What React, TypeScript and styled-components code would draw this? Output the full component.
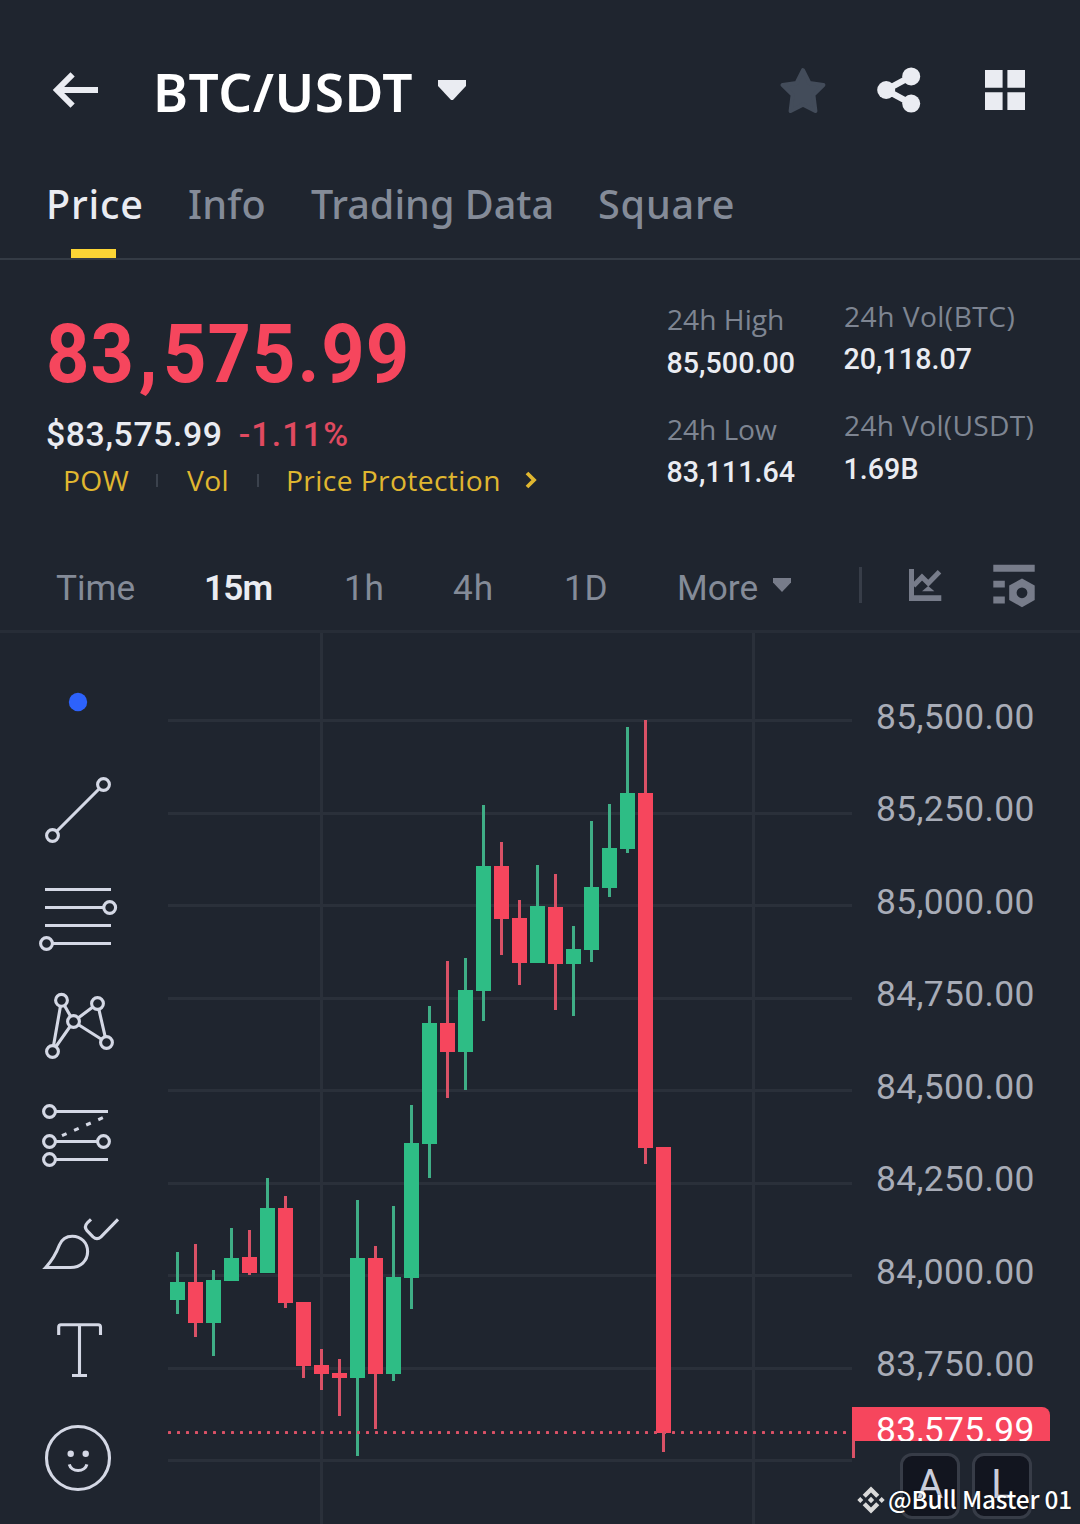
import React from "react";
import styled, { createGlobalStyle } from "styled-components";

const color = {
  bg: "#1f252f",
  text: "#eaecf2",
  muted: "#848b98",
  icon: "#777c8a",
  tool: "#d4d8e5",
  line: "#343b45",
  grid: "#2a303a",
  red: "#f6465d",
  redWick: "#d95166",
  green: "#2ebd85",
  greenWick: "#3fae86",
  gold: "#e0b730",
  axis: "#a8acb7",
};

const heading = `"Noto Sans", sans-serif`;
const label = `"Open Sans", "Noto Sans", sans-serif`;
const din = `Roboto, "Liberation Sans", sans-serif`;

const GlobalStyle = createGlobalStyle`
  *, *::before, *::after { box-sizing: border-box; }
  body { margin: 0; background: ${color.bg}; }
`;

const Screen = styled.main`
  width: 1080px;
  height: 1524px;
  overflow: hidden;
  display: flex;
  flex-direction: column;
  position: relative;
  background: ${color.bg};
  color: ${color.text};
  font-family: ${label};
  white-space: nowrap;
`;

const Icon = styled.svg`
  display: block;
  flex: none;
`;

/* Header */

const Header = styled.header`
  height: 180px;
  flex: none;
  display: flex;
  align-items: center;
  padding: 0 55px 0 50px;
`;

const Pair = styled.h1`
  width: 337px;
  margin: 0;
  padding: 4px 0 0 53px;
  font: 600 53.2px/64px ${heading};
  letter-spacing: 0.5px;
  color: #fff;
`;

const HeaderActions = styled.div`
  margin-left: auto;
  display: flex;
  align-items: center;
`;

const Action = styled.span<{ $gap?: number }>`
  margin-left: ${(p) => p.$gap ?? 0}px;
`;

/* Tabs */

const Tabs = styled.nav`
  height: 80px;
  flex: none;
  display: grid;
  grid-template-columns: 142px 123px 287px auto;
  justify-content: start;
  padding-left: 46px;
  border-bottom: 2px solid ${color.line};
`;

const Tab = styled.div<{ $active?: boolean; $tracking: number }>`
  justify-self: start;
  display: flex;
  flex-direction: column;
  justify-content: space-between;
  align-items: center;
  font: 500 39.6px/49px ${heading};
  letter-spacing: ${(p) => p.$tracking}px;
  color: ${(p) => (p.$active ? color.text : color.muted)};
`;

const TabMarker = styled.span`
  width: 45px;
  height: 9px;
  margin-right: 2px;
  background: #fcd535;
`;

/* Ticker */

const Ticker = styled.section`
  height: 285px;
  flex: none;
  display: flex;
`;

const PriceBlock = styled.div`
  width: 667px;
  padding: 49px 0 0 46px;
`;

const LastPrice = styled.div`
  font: 700 81.5px/90px ${din};
  letter-spacing: 1.1px;
  transform: scaleX(0.93);
  transform-origin: left;
  color: ${color.red};
`;

const Mark = styled.span<{ $before: number; $tracking: number }>`
  margin-left: ${(p) => p.$before}px;
  letter-spacing: ${(p) => p.$tracking}px;
`;

const FiatRow = styled.div`
  display: flex;
  gap: 16px;
  margin-top: 14px;
  font: 500 33.8px/44px ${din};
  letter-spacing: 0.6px;
`;

const Change = styled.span`
  color: #e04a60;
  letter-spacing: 1.2px;
`;

const Tags = styled.div`
  display: grid;
  grid-template-columns: 93px 31px 70px 29px 239px auto;
  justify-content: start;
  align-items: center;
  margin-top: 3px;
  padding-left: 17px;
  font: 400 28.2px/40px ${label};
  letter-spacing: 0.4px;
  color: ${color.gold};
`;

const TagDivider = styled.i`
  width: 2px;
  height: 13px;
  background: #3b424d;
`;

const StatColumn = styled.div<{ $top: number; $width: number }>`
  width: ${(p) => p.$width}px;
  padding-top: ${(p) => p.$top}px;
  display: flex;
  flex-direction: column;
  gap: 32px;
`;

const Stat = styled.dl`
  margin: 0;
  display: flex;
  flex-direction: column;
  gap: 9.5px;
`;

const StatLabel = styled.dt<{ $tracking: number }>`
  font: 400 28.2px/34px ${label};
  letter-spacing: ${(p) => p.$tracking}px;
  color: #7e8592;
`;

const StatValue = styled.dd`
  margin: 0 0 0 -0.5px;
  font: 500 28.6px/34px ${din};
  letter-spacing: 0.05px;
`;

/* Intervals */

const Intervals = styled.nav`
  height: 88px;
  flex: none;
  display: grid;
  grid-template-columns: 148px 140px 109px 111px 113px 182px 50px 84px auto;
  justify-content: start;
  align-items: center;
  padding-left: 56px;
  border-bottom: 3px solid #272d37;
`;

const Interval = styled.span<{ $active?: boolean; $tracking?: number }>`
  display: flex;
  align-items: center;
  padding-top: 0.6px;
  font: ${(p) => (p.$active ? 600 : 400)} 35.2px/44px ${din};
  letter-spacing: ${(p) => p.$tracking ?? 0}px;
  color: ${(p) => (p.$active ? color.text : color.muted)};
`;

const Caret = styled(Icon)`
  margin: -6px 0 0 15px;
`;

const IntervalDivider = styled.i`
  width: 3px;
  height: 36px;
  margin-top: -5px;
  background: #373d48;
`;

const Raised = styled(Icon)<{ $by: number }>`
  margin-top: -${(p) => p.$by}px;
`;

/* Chart */

const ChartArea = styled.section`
  flex: 1;
  display: flex;
  position: relative;
`;

const ToolBar = styled.aside`
  width: 168px;
  padding: 15px 0 0 24px;
  display: flex;
  flex-direction: column;
`;

const ToolIcon = styled(Icon)`
  fill: none;
  stroke: ${color.tool};
  stroke-width: 3.1;
`;

const Axis = styled.div`
  padding: 37.6px 0 0 23px;
  display: flex;
  flex-direction: column;
`;

const AxisLabel = styled.span`
  height: 92.55px;
  font: 400 35.4px/92.55px ${din};
  letter-spacing: 0.35px;
  color: ${color.axis};
`;

const PriceTag = styled.div`
  position: absolute;
  left: 852px;
  top: 774px;
  width: 198px;
  height: 34px;
  overflow: hidden;
  padding-left: 24px;
  border-top-right-radius: 8px;
  background: ${color.red};
  color: #fff;
  font: 400 35.4px/46px ${din};
  letter-spacing: 0.35px;
`;

const TagStem = styled.i`
  position: absolute;
  left: 852px;
  top: 807px;
  width: 3px;
  height: 18px;
  background: ${color.redWick};
`;

const ScaleButtons = styled.div`
  position: absolute;
  left: 900px;
  top: 820px;
  display: flex;
  gap: 12px;
`;

const ScaleButton = styled.button`
  width: 60px;
  height: 66px;
  padding: 0 0 2px;
  border: 3px solid #373c47;
  border-radius: 12px;
  background: #12151f;
  color: #c9cddb;
  font: 400 40px/52px ${din};
`;

const Watermark = styled.div`
  position: absolute;
  left: 857px;
  top: 1482px;
  height: 36px;
  display: flex;
  align-items: center;
  gap: 3px;
  color: #fff;
  font: 500 24.4px/36px "Noto Sans CJK SC", sans-serif;
  letter-spacing: -0.2px;
  text-shadow: 0 0 2px rgba(0, 0, 0, 0.5);
`;

const Handle = styled.span`
  margin-top: -2px;
`;

type Candle = [high: number, bodyTop: number, bodyBottom: number, low: number, up: boolean];

const candles: Candle[] = [
  [619, 649, 667, 681, true],
  [611, 649, 690, 704, false],
  [637, 647, 690, 723, true],
  [595, 625, 648, 648, true],
  [597, 624, 640, 642, false],
  [545, 575, 640, 640, true],
  [563, 575, 670, 675, false],
  [669, 669, 733, 745, false],
  [716, 732, 741, 757, false],
  [726, 740, 745, 783, false],
  [567, 625, 745, 823, true],
  [613, 625, 741, 796, false],
  [573, 644, 741, 748, true],
  [472, 510, 645, 676, true],
  [373, 390, 511, 545, true],
  [328, 390, 419, 465, false],
  [325, 357, 419, 457, true],
  [172, 233, 358, 388, true],
  [209, 233, 286, 322, false],
  [267, 285, 330, 352, false],
  [232, 273, 330, 330, true],
  [241, 274, 331, 377, false],
  [293, 316, 331, 383, true],
  [188, 254, 317, 329, true],
  [171, 215, 255, 264, true],
  [94, 160, 216, 220, true],
  [87, 160, 515, 531, false],
  [514, 514, 800, 819, false],
];

const axisPrices = [
  "85,500.00",
  "85,250.00",
  "85,000.00",
  "84,750.00",
  "84,500.00",
  "84,250.00",
  "84,000.00",
  "83,750.00",
];

const gridRows = Array.from({ length: 9 }, (_, i) => 87.2 + i * 92.5);
const dots = Array.from({ length: 76 }, (_, i) => i * 9);

const Plot = () => (
  <Icon width="685" height="891" viewBox="0 0 685 891">
    {gridRows.map((y) => (
      <rect key={y} x="0" y={Math.round(y) - 1} width="684" height="3" fill={color.grid} />
    ))}
    {[152, 584].map((x) => (
      <rect key={x} x={x} y="-3" width="3" height="894" fill={color.grid} />
    ))}
    {candles.map(([high, top, bottom, low, up], i) => (
      <g key={i}>
        <rect
          x={8 + i * 18}
          y={high}
          width="3"
          height={low - high}
          fill={up ? color.greenWick : color.redWick}
        />
        <rect
          x={2 + i * 18}
          y={top}
          width="15"
          height={bottom - top}
          fill={up ? color.green : color.red}
        />
      </g>
    ))}
    {dots.map((x) => (
      <rect key={x} x={x} y="798" width="3" height="3" rx="0.6" fill={color.redWick} />
    ))}
  </Icon>
);

const ring = (cx: number, cy: number) => (
  <circle key={`${cx}-${cy}`} cx={cx} cy={cy} r="5.9" fill={color.bg} />
);

const Tool = ({ children }: { children: React.ReactNode }) => (
  <ToolIcon width="108" height="108" viewBox="0 0 108 108">
    {children}
  </ToolIcon>
);

const DrawingTools = () => (
  <ToolBar>
    <Tool>
      <circle cx="54" cy="54" r="9.2" fill="#2d62fb" stroke="none" />
    </Tool>
    <Tool>
      <path d="M28.5 79.5 79.5 28.5" />
      {ring(28.5, 79.5)}
      {ring(79.5, 28.5)}
    </Tool>
    <Tool>
      <path d="M21 25.5H87M21 43.5H87M21 61.5H87M21 79.5H87" />
      {ring(85.7, 43.5)}
      {ring(22.5, 79.5)}
    </Tool>
    <Tool>
      <path d="M28.5 79.5 37.5 28.3 49.5 49.5 73.5 31.5 82.5 70.5 49.5 49.5Z" />
      {ring(37.5, 28.3)}
      {ring(73.5, 31.5)}
      {ring(49.5, 49.5)}
      {ring(28.5, 79.5)}
      {ring(82.5, 70.5)}
    </Tool>
    <Tool>
      <path d="M25.5 31.5H84M25.5 61.5H79M25.5 79.5H84" />
      <path d="M38 55.6 80 37.2" strokeDasharray="5 8.2" />
      {ring(25.5, 31.5)}
      {ring(25.5, 61.5)}
      {ring(79.5, 61.5)}
      {ring(25.5, 79.5)}
    </Tool>
    <Tool>
      <path d="M21.7 79.5H46.5C56.5 79.5 63.6 73 63.6 63.6 63.6 54.6 57 48.2 48.3 48.2 41.5 48.2 37.6 51.6 35.4 57 32.4 65 28.5 72 21.7 79.5Z" />
      <path d="M67 31.3 63.8 34.3Q59.5 38.8 63 42.7L69 48.8Q73 52.4 77 48.8L94 31.3" />
    </Tool>
    <Tool>
      <path d="M34.7 39V31Q34.7 28.7 37 28.7H74.2Q76.5 28.7 76.5 31V39M55.5 28.7V79.5M48 79.5H63" />
    </Tool>
    <Tool>
      <circle cx="54" cy="54" r="31.5" />
      <circle cx="46.7" cy="49.7" r="3.2" fill={color.tool} stroke="none" />
      <circle cx="61.7" cy="49.7" r="3.2" fill={color.tool} stroke="none" />
      <path d="M45.3 60.3A9 7.8 0 0 0 62.9 60.3" />
    </Tool>
  </ToolBar>
);

const BackIcon = () => (
  <Icon width="50" height="40" viewBox="0 0 50 40">
    <path d="M22.6 4.4 7 20 22.6 35.6M7 20H48" fill="none" stroke={color.text} strokeWidth="6" />
  </Icon>
);

const StarIcon = () => (
  <Icon width="46" height="48" viewBox="0 0 46 48">
    <path
      d="M23 4.2 29.4 17 43.4 19 33.4 28.8 35.4 45 23 38.6 10.6 45 12.6 28.8 2.6 19 16.6 17Z"
      fill="#434c5a"
      stroke="#434c5a"
      strokeWidth="4"
      strokeLinejoin="round"
    />
  </Icon>
);

const ShareIcon = () => (
  <Icon width="44" height="48" viewBox="0 0 44 48">
    <path d="M34.4 10.2 9 24 34.4 37.8" fill="none" stroke={color.text} strokeWidth="6.4" />
    <circle cx="34.2" cy="10.4" r="9" fill={color.text} />
    <circle cx="9.2" cy="24" r="9" fill={color.text} />
    <circle cx="34.2" cy="37.6" r="9" fill={color.text} />
  </Icon>
);

const GridIcon = () => (
  <Icon width="40" height="40" viewBox="0 0 40 40">
    <path d="M0 0H17.6V17.8H0ZM22.4 0H40V17.8H22.4ZM0 22.2H17.6V40H0ZM22.4 22.2H40V40H22.4Z" fill={color.text} />
  </Icon>
);

const IndicatorIcon = () => (
  <Raised $by={5} width="33" height="32" viewBox="0 0 33 32">
    <path d="M0 0H5V26.3H32.3V32H0Z" fill={color.icon} />
    <path d="M4.5 16.8 13 8 19.3 14.2 30.5 2.8" fill="none" stroke={color.icon} strokeWidth="5" />
    <path d="M13 22.2 19.2 17 25.4 22.2Z" fill={color.icon} />
  </Raised>
);

const SettingsIcon = () => (
  <Raised $by={3} width="42" height="44" viewBox="0 0 42 44">
    <path d="M0.3 0.8H41.7V7.8H0.3ZM0.3 16.8H11.8V23.4H0.3ZM0.3 32.6H11.8V39.4H0.3Z" fill={color.icon} />
    <path
      fillRule="evenodd"
      d="M29 14.4 41.7 21.6V36L29 43.2 16.2 36V21.6ZM29 23.4A5.4 5.4 0 1 0 29 34.2 5.4 5.4 0 1 0 29 23.4Z"
      fill={color.icon}
    />
  </Raised>
);

const BinanceIcon = () => (
  <Icon width="28" height="28" viewBox="0 0 28 28">
    <g fill="#d9d9d9">
      <path d="M14 0.4 22.3 8.7 19.2 11.8 14 6.6 8.8 11.8 5.7 8.7Z" />
      <path d="M14 27.6 22.3 19.3 19.2 16.2 14 21.4 8.8 16.2 5.7 19.3Z" />
      <path d="M14 10.8 17.2 14 14 17.2 10.8 14Z" />
      <path d="M3.3 11 6.3 14 3.3 17 0.3 14ZM24.7 11 27.7 14 24.7 17 21.7 14Z" />
    </g>
  </Icon>
);

export default function App() {
  return (
    <Screen>
      <GlobalStyle />
      <Header>
        <BackIcon />
        <Pair>BTC/USDT</Pair>
        <Icon width="30" height="20" viewBox="0 0 30 20">
          <path d="M1 0H29V6L15 21 1 6Z" fill={color.text} />
        </Icon>
        <HeaderActions>
          <Action>
            <StarIcon />
          </Action>
          <Action $gap={51}>
            <ShareIcon />
          </Action>
          <Action $gap={64}>
            <GridIcon />
          </Action>
        </HeaderActions>
      </Header>

      <Tabs>
        <Tab $active $tracking={0.8}>
          Price
          <TabMarker />
        </Tab>
        <Tab $tracking={0.2}>Info</Tab>
        <Tab $tracking={0}>Trading Data</Tab>
        <Tab $tracking={0.8}>Square</Tab>
      </Tabs>

      <Ticker>
        <PriceBlock>
          <LastPrice>
            83
            <Mark $before={4} $tracking={6}>
              ,
            </Mark>
            575
            <Mark $before={1} $tracking={2}>
              .
            </Mark>
            99
          </LastPrice>
          <FiatRow>
            <span>$83,575.99</span>
            <Change>-1.11%</Change>
          </FiatRow>
          <Tags>
            <span>POW</span>
            <TagDivider />
            <span>Vol</span>
            <TagDivider />
            <span>Price Protection</span>
            <Icon width="12" height="18" viewBox="0 0 12 18">
              <path d="M2 2 9 9 2 16" fill="none" stroke={color.gold} strokeWidth="3.8" />
            </Icon>
          </Tags>
        </PriceBlock>
        <StatColumn $top={42} $width={177}>
          <Stat>
            <StatLabel $tracking={0}>24h High</StatLabel>
            <StatValue>85,500.00</StatValue>
          </Stat>
          <Stat>
            <StatLabel $tracking={-0.1}>24h Low</StatLabel>
            <StatValue>83,111.64</StatValue>
          </Stat>
        </StatColumn>
        <StatColumn $top={38.5} $width={236}>
          <Stat>
            <StatLabel $tracking={0.45}>24h Vol(BTC)</StatLabel>
            <StatValue>20,118.07</StatValue>
          </Stat>
          <Stat>
            <StatLabel $tracking={0.3}>24h Vol(USDT)</StatLabel>
            <StatValue>1.69B</StatValue>
          </Stat>
        </StatColumn>
      </Ticker>

      <Intervals>
        <Interval>Time</Interval>
        <Interval $active $tracking={-0.9}>
          15m
        </Interval>
        <Interval $tracking={0.8}>1h</Interval>
        <Interval $tracking={1}>4h</Interval>
        <Interval $tracking={0.8}>1D</Interval>
        <Interval>
          More
          <Caret width="18" height="14" viewBox="0 0 18 14">
            <path d="M0 0H18V4.5L9 14 0 4.5Z" fill={color.icon} />
          </Caret>
        </Interval>
        <IntervalDivider />
        <IndicatorIcon />
        <SettingsIcon />
      </Intervals>

      <ChartArea>
        <DrawingTools />
        <Plot />
        <Axis>
          {axisPrices.map((price) => (
            <AxisLabel key={price}>{price}</AxisLabel>
          ))}
        </Axis>
        <PriceTag>83,575.99</PriceTag>
        <TagStem />
        <ScaleButtons>
          <ScaleButton>A</ScaleButton>
          <ScaleButton>L</ScaleButton>
        </ScaleButtons>
      </ChartArea>

      <Watermark>
        <BinanceIcon />
        <Handle>@Bull Master 01</Handle>
      </Watermark>
    </Screen>
  );
}
